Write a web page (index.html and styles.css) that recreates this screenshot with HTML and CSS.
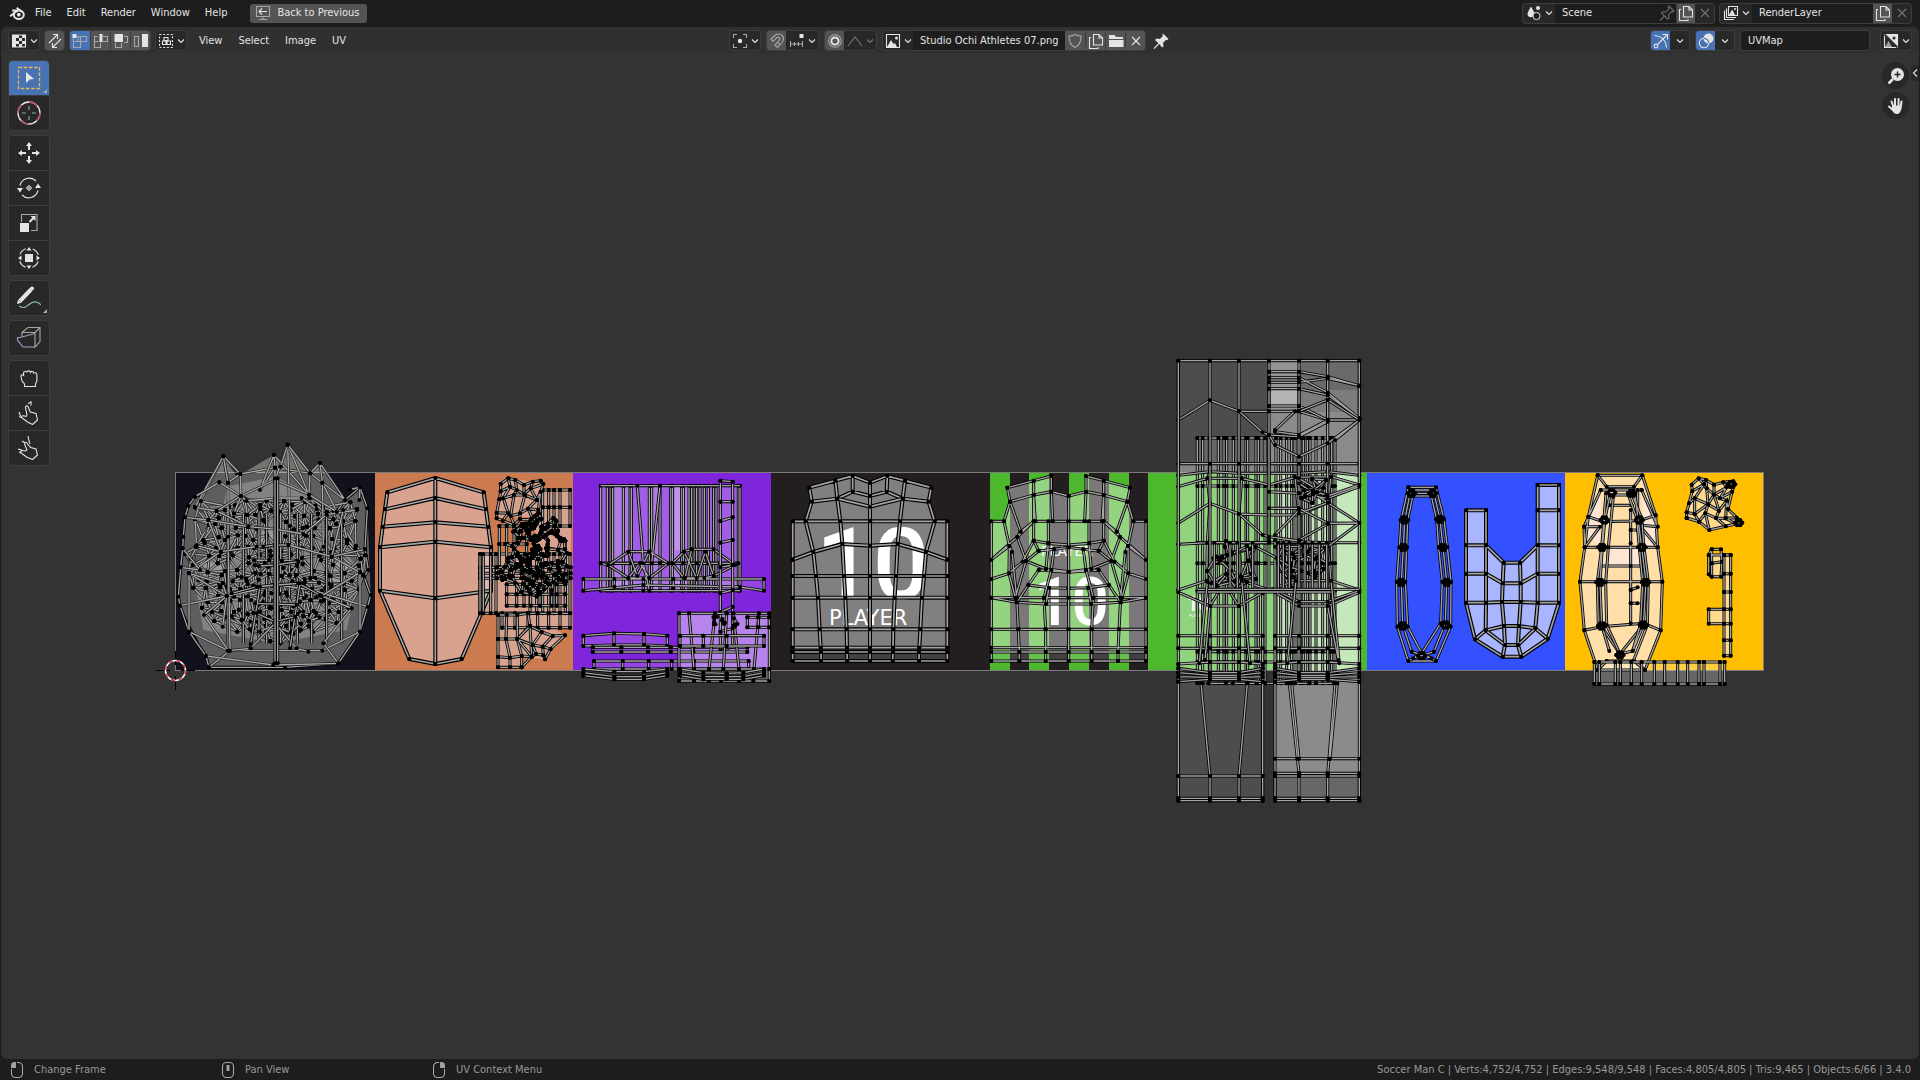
FILE: index.html
```html
<!DOCTYPE html>
<html lang="en">
<head>
<meta charset="utf-8">
<title>UV Editor</title>
<link rel="stylesheet" href="styles.css">
</head>
<body>
<svg class="sprite" aria-hidden="true">
  <symbol id="chev" viewBox="0 0 10 10"><path d="M2 3.500l3 3 3-3" class="ln"/></symbol>
  <symbol id="copy" viewBox="0 0 18 18"><path d="M6.500 2.500H12l3.500 3.500v7h-9zM12 2.500V6h3.500M4 5.500H2.500v11h8.500V15" class="ln"/></symbol>
  <symbol id="close" viewBox="0 0 18 18"><path d="M5 5l8 8M13 5l-8 8" class="ln"/></symbol>
  <symbol id="pin" viewBox="0 0 18 18"><path d="M11 2l5 5-1.500 1-1-.5-3 3.500.5 3-1.500 1L3.500 9l1.500-1.200 3 .2L11 5l-.8-1.500zM6.500 12L2 16.500" class="ln"/></symbol>
  <symbol id="pinfull" viewBox="0 0 18 18"><path d="M11 1.500l5.500 5.500-1.500 1.200-1-.4-3 3.200.6 3.200-1.600 1.300L7.300 12 3 16.600l-1.400.4.500-1.400L6.500 11.200 3 8l1.500-1.400 3.300.4 3.200-3-.6-1z" class="fl"/></symbol>
  <symbol id="blender" viewBox="0 0 18 18"><path d="M2 12.200L9.500 6.500H4.200M8.700 3.800l6 4.500" class="lg"/><ellipse cx="10.800" cy="10.700" rx="5" ry="4.300" class="lg"/><circle cx="10.800" cy="10.700" r="1.900" class="fl"/></symbol>
  <symbol id="back" viewBox="0 0 18 18"><path d="M2.500 2.500h13v10h-13zM9 13v2.500M5 15.500h8" class="ln dim"/><path d="M13 7.500H5M8 4.500l-3 3 3 3" class="ln"/></symbol>
  <symbol id="scene" viewBox="0 0 18 18"><path d="M6 2.500c2 3.500 3.500 5.600 3.500 8a3.600 3.600 0 0 1-7 0c0-2.400 1.500-4.500 3.500-8z" class="fl"/><circle cx="13" cy="4" r="2" class="fl"/><circle cx="11.500" cy="12" r="3.600" fill="#1f1f1f" class="disc"/></symbol>
  <symbol id="layers" viewBox="0 0 18 18"><path d="M2.500 6.500v9H12M4.500 4.500v9H14M6.500 2.500h9v9h-9z" class="ln"/><path d="M7 11l3.200-5.500 2.800 5.500z" class="fl"/><circle cx="13" cy="5" r="1" class="fl"/></symbol>
  <symbol id="uved" viewBox="0 0 18 18"><path d="M2.500 3h13v12h-13z" class="ln"/><path d="M2 3h4v12H2zM6 3h3v3H6zM9 6h3v3H9zM12 3h3v3h-3zM6 9h3v3H6zM12 9h3v3h-3zM9 12h3v3H9z" class="fl"/></symbol>
  <symbol id="sync" viewBox="0 0 18 18"><path d="M3 11L11.500 2.500M7 2.500h4.500V7M15 7l-8.500 8.500M11 15.500H6.500V11" class="ln"/></symbol>
  <symbol id="vert" viewBox="0 0 18 18"><path d="M6.500 4.500h9v5h-13v6h7v-11M2.500 9.500v-3M7 10v-5" class="ln dim"/><path d="M1.500 2h4v4h-4z" class="fl"/></symbol>
  <symbol id="edge" viewBox="0 0 18 18"><path d="M5.500 4.500h-3v11h6v-5M2.500 9.500h4M11 4.500h4.500v5h-5" class="ln dim"/><path d="M7.500 2h3v8h-3z" class="fl"/></symbol>
  <symbol id="face" viewBox="0 0 18 18"><path d="M3.500 11v4.500h6V11M12 4.500h3.500v6H12" class="ln dim"/><path d="M2.500 2h8.500v8H2.500z" class="fl"/></symbol>
  <symbol id="island" viewBox="0 0 18 18"><path d="M2.500 4.500h4v10h-4z" class="ln dim"/><path d="M10 2h6v13h-6z" class="fl"/></symbol>
  <symbol id="sticky" viewBox="0 0 18 18"><path d="M2.500 2.500h13v13h-13z" class="ln" stroke-dasharray="2 1.700"/><path d="M7 5.500h4v3H7zM5.500 9h3.500v3.500H5.500zM10 9h3.500v3.500H10z" class="ln"/></symbol>
  <symbol id="pivot" viewBox="0 0 18 18"><path d="M2.500 6V2.500H6M12 2.500h3.500V6M15.500 12v3.500H12M6 15.500H2.500V12" class="ln dim"/><circle cx="9" cy="9" r="2.200" class="fl"/></symbol>
  <symbol id="magnet" viewBox="0 0 18 18"><path d="M3 7l4.500-4c5-3 10 2 7 7l-5 5.500-2.500-2.500L11.500 8c1-2-.5-3.500-2.500-2.500L5 9.500zM9.500 10.500l2.500 2.500" class="ln dim"/></symbol>
  <symbol id="incr" viewBox="0 0 18 18"><path d="M2.500 9v6M2.500 12h12M14.500 9v6M6.500 10v4M10.500 10v4" class="ln dim"/><path d="M11.500 2h4v4h-4z" class="fl"/></symbol>
  <symbol id="prop" viewBox="0 0 18 18"><circle cx="9" cy="9" r="6.300" class="ln dim"/><circle cx="9" cy="9" r="3.600" class="lg"/></symbol>
  <symbol id="falloff" viewBox="0 0 18 18"><path d="M2 14L9 5l7 9" class="ln"/></symbol>
  <symbol id="image" viewBox="0 0 18 18"><path d="M2.500 2.500h13v13h-13z" class="ln"/><path d="M3 15L7 8l2.500 4 1.500-1 2 4z" class="fl"/><circle cx="12.500" cy="6" r="1.500" class="fl"/></symbol>
  <symbol id="shield" viewBox="0 0 18 18"><path d="M9 2.500c2 1.300 4 1.700 6 1.500 0 6-1.500 9.500-6 11.500-4.500-2-6-5.500-6-11.500 2 .2 4-.2 6-1.500z" class="ln dim"/></symbol>
  <symbol id="folder" viewBox="0 0 18 18"><path d="M2 3h5.500l1.500 2h7v2H2zM2 8h14.500v7H2z" class="fl"/></symbol>
  <symbol id="gizmo" viewBox="0 0 18 18"><path d="M5 13L15 3M10.500 2.500H15.500V7.500M2.500 3.500c7 .5 11.500 5 12 12" class="ln"/><circle cx="4" cy="14" r="1.900" class="ln"/></symbol>
  <symbol id="overlay" viewBox="0 0 18 18"><circle cx="11.500" cy="6.500" r="5" class="fl"/><circle cx="7" cy="11" r="4.700" class="ln"/><path d="M7 6.300a4.700 4.700 0 0 1 4.700 4.700" fill="none" stroke="#4772b3" stroke-width="1.200"/></symbol>
  <symbol id="display" viewBox="0 0 18 18"><path d="M2.500 2.500h13v13h-13z" class="ln"/><path d="M2 2h13.500v13z" class="fl"/><path d="M3 15l3.500-6 3.500 6z" class="fl dimf"/><circle cx="12" cy="6" r="1.600" fill="#303030"/><path d="M2.500 2.500l13 13" stroke="#303030" stroke-width="2"/></symbol>
  <symbol id="t-select" viewBox="0 0 24 24"><path d="M1.500 1.500h21v21h-21z" fill="none" stroke="#f0b45a" stroke-width="1.300" stroke-dasharray="3.500 1.700"/><path d="M9 6l8 7-4.300.6L9 17z" class="fl"/></symbol>
  <symbol id="t-cursor" viewBox="0 0 24 24"><circle cx="12" cy="12" r="11" fill="none" stroke="#e8e8e8" stroke-width="1.300"/><circle cx="12" cy="12" r="11" fill="none" stroke="#b8445c" stroke-width="1.300" stroke-dasharray="8.640 8.640"/><path d="M12 5v4M12 15v4M5 12h4M15 12h4" fill="none" stroke="#7fae98" stroke-width="1.200"/></symbol>
  <symbol id="t-move" viewBox="0 0 24 24"><path d="M12 1l3 4H9zM12 23l3-4H9zM1 12l4-3v6zM23 12l-4-3v6z" class="fl"/><path d="M12 5v4M12 15v4M5 12h4M15 12h4" class="lg"/></symbol>
  <symbol id="t-rotate" viewBox="0 0 24 24"><path d="M3 9.500A9.500 9.500 0 0 1 19 5M21 14.500A9.500 9.500 0 0 1 5 19" class="ln"/><path d="M0 12h6l-3 4.500zM24 12h-6l3-4.500z" class="fl"/><path d="M12 9l3 3-3 3-3-3z" fill="#a0a0a0" stroke="#a0a0a0"/></symbol>
  <symbol id="t-scale" viewBox="0 0 24 24"><path d="M4.500 11V3.500h15.500v16H14" class="ln dim"/><path d="M3 12h9v9H3zM18.500 5v5l-5-5z" class="fl"/><path d="M12.500 11l4-4" class="lg"/></symbol>
  <symbol id="t-transform" viewBox="0 0 24 24"><circle cx="12" cy="12" r="9.800" class="ln" stroke-dasharray="8.400 7" stroke-dashoffset="-3.500"/><path d="M8 8h8v8H8zM12 1l2.500 3.500h-5zM12 23l2.500-3.500h-5zM1 12l3.500-2.500v5zM23 12l-3.500-2.500v5z" class="fl"/></symbol>
  <symbol id="t-annotate" viewBox="0 0 24 24"><path d="M3 15L14 3.500" stroke="#e4e4e4" stroke-width="4"/><path d="M0 18l1-4.500 3.500 3.300z" class="fl"/><circle cx="15" cy="2.600" r="2" class="fl"/><path d="M2 20c5 3 7 1 10-1.500S20 14 24 19" fill="none" stroke="#7dbd95" stroke-width="1.200"/></symbol>
  <symbol id="t-rip" viewBox="0 0 24 24"><path d="M5 6.500l6-5h12v14L18 21V6.500h-13v4M18 6.500l5-5" class="ln dim"/><path d="M-1 12.500L18 7.500M18 21H6L-1 12.500" fill="none" stroke="#a9a2c9" stroke-width="1.100"/><circle cx="-1" cy="12.500" r="1.900" fill="#b7b0dc"/></symbol>
  <symbol id="t-grab" viewBox="0 0 24 24"><path d="M7.500 20.500v-2.500L5 15l-1-4.500c0-1.800 1.500-2.200 2.600-1.200V6.700c.6-2 3-1.700 3.200-.4.5-2 3.400-1.900 3.700 0 .8-1.500 3.200-1 3.400.8 1.200-.8 3 0 3 1.700v6L18.500 18v2.500z" class="ln"/></symbol>
  <symbol id="t-relax" viewBox="0 0 24 24"><path d="M10 14L8.500 6.500c0-2 2.500-2.300 3 0l1.700 4.500 5.800 1.500 1.500 6.500-5 4.500-5-2.500-6-4.500c0-2 2-2.300 4.500-1zM2 11l1.500 4M11 2.500l3-1.500v3.500M2 15.500l2.500 1" class="ln"/></symbol>
  <symbol id="t-pinch" viewBox="0 0 24 24"><path d="M10 14L7.500 8c0-2 2-2.600 3 0l3.200 3.500 5.300 1.500 1.500 6-5 4.500-6-2.500-6-4.500c0-2 2-2.500 4.500-1.500zM1 13l4 1M5 5l3 2M11 0l1 5M2 16l3 1.500M13 8l-1-3" class="ln"/></symbol>
  <symbol id="g-zoom" viewBox="0 0 18 18"><circle cx="10.500" cy="7.500" r="6.500" class="fl"/><path d="M6 12l-4.500 4.500" stroke="#e4e4e4" stroke-width="2.500"/><path d="M10.500 4.500v6M7.500 7.500h6" stroke="#222" stroke-width="1.400"/></symbol>
  <symbol id="g-hand" viewBox="0 0 18 18"><path d="M4.500 4.500L6.500 10M8 2v8M11.500 2v8M14.500 4.500L13.500 11M2 9.500L6 13" stroke="#e4e4e4" stroke-width="2" stroke-linecap="round"/><path d="M5.500 8.500h9c0 4-1 8.500-4.500 8.500-3 0-4.500-2.500-5.500-5z" class="fl"/></symbol>
  <symbol id="m-l" viewBox="0 0 12 18"><path d="M6 1.500h1.500a4 4 0 0 1 4 4v7a4 4 0 0 1-4 4h-3a4 4 0 0 1-4-4V8" class="ln dim"/><path d="M0 7V4.500A3.500 3.500 0 0 1 3.500 1H5v6z" class="fl dimf"/></symbol>
  <symbol id="m-m" viewBox="0 0 12 18"><rect x=".5" y="1.500" width="11" height="15" rx="4" class="ln dim"/><path d="M4.500 4h3v6h-3z" class="fl dimf"/></symbol>
  <symbol id="m-r" viewBox="0 0 12 18"><path d="M6 1.500H4.500a4 4 0 0 0-4 4v7a4 4 0 0 0 4 4h3a4 4 0 0 0 4-4V8" class="ln dim"/><path d="M12 7V4.500A3.500 3.500 0 0 0 8.500 1H7v6z" class="fl dimf"/></symbol>
</svg>

<header class="topbar">
  <nav class="menus" aria-label="Application">
    <button class="logo" aria-label="Blender"><svg class="i"><use href="#blender"/></svg></button>
    <button>File</button><button>Edit</button><button>Render</button><button>Window</button><button>Help</button>
    <button class="back"><svg class="i"><use href="#back"/></svg>Back to Previous</button>
  </nav>
  <div class="side">
    <div class="grp">
      <button class="dd wide" aria-label="Browse scene"><svg class="i"><use href="#scene"/></svg><svg class="c"><use href="#chev"/></svg></button>
      <input class="f-top" aria-label="Scene name" value="Scene"><button class="sq deep faint" aria-label="Pin scene"><svg class="i"><use href="#pin"/></svg></button>
      <button class="sq lit" aria-label="New scene"><svg class="i"><use href="#copy"/></svg></button><button class="sq faint" aria-label="Delete scene"><svg class="i"><use href="#close"/></svg></button>
    </div>
    <div class="grp">
      <button class="dd wide" aria-label="Browse layer"><svg class="i"><use href="#layers"/></svg><svg class="c"><use href="#chev"/></svg></button>
      <input class="f-top wide" aria-label="Layer name" value="RenderLayer">
      <button class="sq lit" aria-label="New layer"><svg class="i"><use href="#copy"/></svg></button><button class="sq faint" aria-label="Delete layer"><svg class="i"><use href="#close"/></svg></button>
    </div>
  </div>
</header>

<main class="editor">
  <div class="head">
    <div class="part start">
      <div class="grp"><button class="dd" aria-label="Editor type"><svg class="i"><use href="#uved"/></svg><svg class="c"><use href="#chev"/></svg></button></div>
      <div class="grp"><button class="sq lit" aria-label="Sync selection"><svg class="i"><use href="#sync"/></svg></button></div>
      <div class="grp modes"><button class="sq on" aria-label="Vertex"><svg class="i"><use href="#vert"/></svg></button><button class="sq lit" aria-label="Edge"><svg class="i"><use href="#edge"/></svg></button><button class="sq lit" aria-label="Face"><svg class="i"><use href="#face"/></svg></button><button class="sq lit" aria-label="Island"><svg class="i"><use href="#island"/></svg></button></div>
      <div class="grp"><button class="dd" aria-label="Sticky selection"><svg class="i"><use href="#sticky"/></svg><svg class="c"><use href="#chev"/></svg></button></div>
      <nav class="menus sub" aria-label="Editor"><button>View</button><button>Select</button><button>Image</button><button>UV</button></nav>
    </div>
    <div class="part mid">
      <div class="grp"><button class="dd" aria-label="Pivot"><svg class="i"><use href="#pivot"/></svg><svg class="c"><use href="#chev"/></svg></button></div>
      <div class="grp"><button class="sq lit" aria-label="Snap"><svg class="i"><use href="#magnet"/></svg></button><button class="dd wide" aria-label="Snap target"><svg class="i"><use href="#incr"/></svg><svg class="c"><use href="#chev"/></svg></button></div>
      <div class="grp"><button class="sq lit" aria-label="Proportional editing"><svg class="i"><use href="#prop"/></svg></button><button class="dd wide off" aria-label="Falloff"><svg class="i"><use href="#falloff"/></svg><svg class="c"><use href="#chev"/></svg></button></div>
      <div class="grp file"><button class="dd" aria-label="Browse image"><svg class="i"><use href="#image"/></svg><svg class="c"><use href="#chev"/></svg></button><input class="f-img" aria-label="Image name" value="Studio Ochi Athletes 07.png"><button class="sq lit" aria-label="Fake user"><svg class="i"><use href="#shield"/></svg></button><button class="sq lit" aria-label="New image"><svg class="i"><use href="#copy"/></svg></button><button class="sq lit" aria-label="Open image"><svg class="i"><use href="#folder"/></svg></button><button class="sq lit" aria-label="Unlink"><svg class="i"><use href="#close"/></svg></button></div>
      <button class="bare" aria-label="Pin image"><svg class="i"><use href="#pinfull"/></svg></button>
    </div>
    <div class="part end">
      <div class="grp"><button class="sq on" aria-label="Gizmos"><svg class="i"><use href="#gizmo"/></svg></button><button class="sq" aria-label="Gizmo options"><svg class="c"><use href="#chev"/></svg></button></div>
      <div class="grp"><button class="sq on" aria-label="Overlays"><svg class="i"><use href="#overlay"/></svg></button><button class="sq" aria-label="Overlay options"><svg class="c"><use href="#chev"/></svg></button></div>
      <div class="grp"><input class="f-uv" aria-label="Active UV map" value="UVMap"></div>
      <div class="grp last"><button class="dd" aria-label="Display channels"><svg class="i"><use href="#display"/></svg><svg class="c"><use href="#chev"/></svg></button></div>
    </div>
  </div>
  <div class="stage">
    <svg class="uv" viewBox="1 53 1918 1006" role="img" aria-label="UV layout">
      <defs><marker id="v" markerUnits="userSpaceOnUse" markerWidth="14" markerHeight="14" viewBox="-7 -7 14 14" overflow="visible"><circle r="6"/></marker></defs>
      <g id="tiles">
        <path fill="#11121b" d="M175 473h200v197H175z"/><path fill="#cc7a50" d="M375 473h198v197H375z"/>
        <path fill="#7f25dc" d="M573 473h198v197H573z"/><path fill="#231f20" d="M771 473h377v197H771z"/>
        <path fill="#4db82e" d="M990 473h20v197h-20zM1029 473h20v197h-20zM1069 473h20v197h-20zM1109 473h20v197h-20zM1148 473h219v197h-219z"/>
        <path fill="#3351ff" d="M1367 473h198v197h-198z"/><path fill="#ffbe00" d="M1565 473h199v197h-199z"/>
        <rect x="175.500" y="472.500" width="1588" height="198" fill="none" stroke="#7a7a7a"/>
      </g>
      <g id="fills"></g>
      <g class="print">
        <text x="816" y="599" class="num-l">10</text><text x="829" y="625" class="name-l">PLAYER</text>
        <text x="1034" y="625" class="num-m">10</text><text x="1041" y="556" class="name-m">PLAYER</text>
        <text x="1187" y="611" class="num-s">10</text><text x="1189" y="617" class="name-s">PLAYER</text>
      </g>
      <g id="wires"></g>
      <g class="cur"><path d="M156 670.500h14M181 670.500h14M175.500 651v14M175.500 676v14" stroke="#000"/><circle cx="175.500" cy="670.500" r="10"/><circle cx="175.500" cy="670.500" r="10" class="red"/></g>
    </svg>
    <div class="tools" role="toolbar" aria-label="Tools">
      <div class="tg"><button class="on more" aria-label="Select box"><svg><use href="#t-select"/></svg></button><button aria-label="Cursor"><svg><use href="#t-cursor"/></svg></button></div>
      <div class="tg"><button aria-label="Move"><svg><use href="#t-move"/></svg></button><button aria-label="Rotate"><svg><use href="#t-rotate"/></svg></button><button aria-label="Scale"><svg><use href="#t-scale"/></svg></button><button aria-label="Transform"><svg><use href="#t-transform"/></svg></button></div>
      <div class="tg"><button class="more" aria-label="Annotate"><svg><use href="#t-annotate"/></svg></button></div>
      <div class="tg"><button aria-label="Rip region"><svg><use href="#t-rip"/></svg></button></div>
      <div class="tg"><button aria-label="Grab"><svg><use href="#t-grab"/></svg></button><button aria-label="Relax"><svg><use href="#t-relax"/></svg></button><button aria-label="Pinch"><svg><use href="#t-pinch"/></svg></button></div>
    </div>
    <div class="nav"><div class="rounds"><button aria-label="Zoom"><svg><use href="#g-zoom"/></svg></button><button aria-label="Pan"><svg><use href="#g-hand"/></svg></button></div><button class="tab" aria-label="Show sidebar"><svg viewBox="0 0 8 16"><path d="M6 4.500L2.500 8 6 11.500" class="ln"/></svg></button></div>
  </div>
</main>

<footer class="status">
  <span class="hint"><svg><use href="#m-l"/></svg>Change Frame</span>
  <span class="hint"><svg><use href="#m-m"/></svg>Pan View</span>
  <span class="hint"><svg><use href="#m-r"/></svg>UV Context Menu</span>
  <span class="stats">Soccer Man C | Verts:4,752/4,752 | Edges:9,548/9,548 | Faces:4,805/4,805 | Tris:9,465 | Objects:6/66 | 3.4.0</span>
</footer>
<script src="mesh.js"></script>
</body>
</html>
```

FILE: mesh.js
```js
// Island coordinates are stored at three units per canvas pixel, relative to an origin.
const NS = 'http://www.w3.org/2000/svg';
const layer = (id, x, y) => {
  const g = document.createElementNS(NS, 'g');
  g.setAttribute('transform', `translate(${x} ${y}) scale(${1 / 3})`);
  document.getElementById(id).append(g);
  return g;
};
function island(x, y, tint = '') {
  const f = layer('fills', x, y), w = layer('wires', x, y);
  const add = (g, d, cls, a) => {
    const p = document.createElementNS(NS, 'path');
    p.setAttribute('d', d);
    p.setAttribute('class', cls);
    if (a !== undefined) p.setAttribute('fill-opacity', a);
    g.append(p);
  };
  const api = {
    fill: (d, a, t = tint) => add(f, d, 'skin ' + t, a),
    lines(d, thin) {
      const k = thin ? ' thin' : '';
      add(w, d, 'dark' + k);
      add(w, d, 'light' + k);
    },
    wire(d, thin) { api.lines(d, thin); add(w, d, 'dots'); },
    // every edge keeps its own outline, so crossing edges stay apart
    weave(d, k = 'thin') {
      d.split('M').slice(1).forEach(s => { add(w, 'M' + s, 'dark ' + k); add(w, 'M' + s, 'light ' + k); });
      add(w, d, 'dots');
    }
  };
  return api;
}
// "x,y x,y | x,y x,y" -> path data; mirror reflects about an x axis
const poly = s => s.split('|').map(r => 'M' + r.trim().split(/\s+/).join('L')).join('');
const mirror = (s, c) => s.replace(/(\d+),(\d+)/g, (_, a, b) => `${2 * c - a},${b}`);
const grid = rows => {
  const p = rows.map(r => r.trim().split(/\s+/));
  let d = p.map(r => 'M' + r.join('L')).join('');
  p[0].forEach((_, i) => { d += 'M' + p.map(r => r[i]).join('L'); });
  return d;
};
const box = (xs, ys) => grid(ys.map(y => xs.map(x => x + ',' + y).join(' ')));
const bars = (xs, a, b) => xs.map(x => `M${x},${a}L${x},${b}`).join('');
let seed = 11;
const rnd = () => {
  seed = (seed + 0x6D2B79F5) | 0;
  let t = Math.imul(seed ^ (seed >>> 15), 1 | seed);
  t = (t + Math.imul(t ^ (t >>> 7), 61 | t)) ^ t;
  return ((t ^ (t >>> 14)) >>> 0) / 4294967296;
};
function web(pts, n, skip = 0) {
  let d = '';
  pts.forEach((p, i) => {
    pts.map((q, j) => [Math.hypot(p[0] - q[0], p[1] - q[1]), j]).sort((a, b) => a[0] - b[0]).slice(1 + skip, n + 1 + skip)
      .forEach(([, j]) => { if (j > i || rnd() > .6) d += `M${p}L${pts[j]}`; });
  });
  return d;
}
const cloud = (n, cx, cy, rx, ry, k = .5) => Array.from({ length: n }, () => {
  const a = rnd() * 6.283, r = Math.pow(rnd(), k);
  return [Math.round(cx + rx * r * Math.cos(a)), Math.round(cy + ry * r * Math.sin(a))];
});
const twins = (pts, c) => pts.flatMap(([x, y]) => [[x, y], [2 * c - x + Math.round(rnd() * 8), y + Math.round(rnd() * 6)]]);
// points on a loose lattice, kept when they fall inside the ellipse
const scatter = (step, cx, cy, rx, ry) => {
  const out = [];
  for (let y = cy - ry; y <= cy + ry; y += step)
    for (let x = cx - rx; x <= cx; x += step) {
      const p = [Math.round(x + (rnd() - .5) * step * .9), Math.round(y + (rnd() - .5) * step * .9)];
      if (((p[0] - cx) / rx) ** 2 + ((p[1] - cy) / ry) ** 2 < 1) out.push(p);
    }
  return out;
};

// Head
const A = island(160, 430);
A.fill('M105,200L130,205L190,79L230,140L342,75L362,100L383,44L450,130L480,99L550,210L600,172L622,235L632,495L600,605L535,700L375,712L147,712L138,678L60,527L62,415L72,262Z', .32, 'warm');
A.fill('M200,170L345,140L450,190L500,300L600,420L560,600L345,640L130,600L100,430L180,300Z', .24, 'warm');
A.fill('M120,400L215,400L200,480L120,440ZM520,380L600,420L560,480L500,440ZM310,300L400,300L430,350L290,350Z', .2, 'warm');
const rim = '105,200 85,228 75,262 70,320 68,355 62,412 55,500 60,527 87,605 138,678 147,712 375,712 535,700 600,605 623,530 632,495 612,440 625,420 615,358 622,235 600,172 555,210 530,245';
const hair = '122,213 190,79 204,158 241,132 345,113 450,130 487,158 530,245|241,132 190,79 105,232|204,158 190,79|342,75 300,180 345,113 342,75 447,194 383,44 345,150|383,44 390,288|383,44 362,110|383,44 450,130 447,194|480,99 450,130|480,99 555,210 487,158 480,99|487,158 490,350|204,158 204,320 210,662 147,712|241,132 243,198 345,150 447,194 530,245|170,243 243,198 260,213 345,204 425,204 470,237|105,232 170,243 265,290 350,298 430,312 500,254 590,240|178,157 105,200|178,157 243,198 222,250|570,178 600,172 598,210|345,113 347,690 340,705|87,605 205,662 487,662 600,605|138,678 340,705 535,700|205,662 272,655 345,580 410,655 445,665|60,527 200,498 355,465 455,480 623,530|87,430 182,365 290,350 385,345 515,380 600,427|87,430 200,498 132,555 205,662|600,427 485,498 575,535 490,640 535,700|110,347 182,365 145,270 265,290|75,262 145,270|615,358 515,380 550,240|68,355 120,420 62,412|188,460 87,430|188,460 200,498 188,590|87,430 87,605|600,427 600,605';
A.wire(poly(rim), 1);
const known = '105,232 122,213 170,243 145,270 105,267 110,347 182,365 200,498 87,430 188,460 265,290 300,225 222,250 310,270 243,198'.split(' ').map(s => s.split(',').map(Number));
const head = twins([...known, ...scatter(32, 345, 415, 275, 225)], 345);
const features = twins(scatter(27, 345, 500, 150, 120), 345);
A.weave(web(head, 3, 7), 'soft');
A.weave(web(head, 3, 2), 'soft');
A.lines(bars([204, 250, 297, 320, 362, 388, 412, 455, 500, 545], 250, 640), 1);
A.weave(web(features, 2, 2), 'soft');
A.weave(poly(hair), 'soft');
A.wire(poly('272,655 272,642 300,470 420,460 390,655|285,520 410,525 430,545|310,350 345,345 385,345|297,408 345,405 415,395|290,550 345,575 405,560|215,490 290,470 345,465 415,460 480,495'), 1);
A.wire(bars([345, 353], 145, 700), 1);

// Face and torso skin
A.fill('M826,144L971,187L993,352L990,482L905,687L826,702L748,687L660,482L660,352L682,187Z', .5, 'rose');
A.wire(grid(['682,187 826,144 971,187', '675,238 826,204 978,238', '668,290 826,277 985,290', '660,352 826,335 993,352', '660,482 826,505 993,482', '748,687 826,702 905,687']));

// Hands
A.fill('M960,372H1235V595H1010V550H960ZM1125,180H1232V372H1125ZM1010,550H1110L1215,616L1155,688L1085,680V712H1014ZM1020,160L1045,145L1150,160L1125,260L1010,265Z', .5, 'rose');
A.wire(box([960, 1008, 1110, 1130, 1148, 1166, 1182, 1200, 1216, 1230], [372, 550]), 1);
A.wire(box([1148, 1166, 1182, 1200, 1230], [180, 232, 288]), 1);
A.wire(box([1018, 1040, 1062, 1100], [288, 342, 412]), 1);
A.wire(box([960, 1010, 1050, 1085, 1130, 1232], [412, 430, 445]), 1);
A.wire(box([1040, 1070, 1092, 1112, 1140, 1175, 1190, 1216], [463, 493, 527]), 1);
A.wire(box([1026, 1065, 1104, 1133, 1166, 1200, 1230], [550, 593]), 1);
A.wire(bars([960, 970, 992], 372, 550), 1);
A.wire(grid(['1014,555 1040,555 1072,555 1104,550', '1014,627 1038,627 1072,627 1110,588', '1014,680 1050,683 1085,678 1115,680', '1014,712 1050,712 1085,712 1085,712']), 1);
A.wire(grid(['1110,588 1145,606 1178,618 1215,616', '1072,627 1118,645 1148,650 1172,657', '1115,680 1128,672 1150,676 1155,688']), 1);
A.wire(grid(['1022,162 1045,145 1066,150 1092,165 1118,155 1142,152', '1022,184 1050,170 1070,180 1092,192 1112,175 1150,162', '1018,208 1030,205 1062,195 1095,195 1130,210 1142,185', '1010,248 1045,250 1052,258 1080,250 1104,236 1135,240', '1010,265 1028,272 1062,285 1080,268 1120,270 1140,255']), 1);
A.weave(web([...cloud(100, 1128, 380, 98, 120, .6), ...cloud(40, 1135, 300, 60, 60), ...cloud(50, 1125, 430, 105, 60)], 4, 1));

// Kit
const B = island(560, 450);
B.fill('M122,107H542V422H122Z', .26);
B.fill('M158,107H210V422H158ZM275,107H300V422H275ZM340,107H405V422H340Z', .18);
B.fill('M345,107H365V300H345Z', .2);
B.fill('M70,387H612V422H70Z', .15);
B.fill('M357,490H630V660H357Z', .44);
B.fill('M357,660H630V693H357Z', .25);
B.fill('M70,555L162,550L322,557V588H70ZM100,592H350V606H100ZM102,633H350V657H102Z', .15);
B.weave(bars([122, 142, 153, 158, 190, 210, 214, 268, 275, 300, 332, 337, 365, 370, 387, 395, 405, 410, 420, 433, 445, 461, 468, 535, 540], 107, 422));
B.lines('M122,107H540M122,340H540M122,422H540', 1);
B.wire(poly([122, 158, 214, 250, 300, 340, 370, 410, 445, 480, 518, 535].map(x => x + ',340').join(' ')), 1);
B.wire(poly('232,107 250,340 268,422|300,107 275,340|122,340 145,345 205,305 268,305 325,340 268,384 205,384 145,345|337,340 372,305 395,298 461,298 525,345 461,378 433,384 372,384 337,340|205,305 232,378 268,305|205,384 240,340 268,384|372,305 410,384 436,305|395,298 375,384|436,305 461,378|70,422 70,387 340,387 612,387 612,422 540,411 250,405 70,422|163,387 163,410|250,387 250,422|340,387 340,415'), 1);
B.wire(grid(['481,92 518,95', '481,155 518,155', '481,213 518,202', '481,278 518,270', '481,352 518,345', '481,430 518,420', '481,487 518,470', '481,545 518,535', '481,604 518,590']), 1);
B.wire(grid(['70,557 162,550 252,552 322,557', '70,588 162,585 252,585 322,588']), 1);
B.wire(grid(['98,592 184,592 264,592 332,592 400,592 562,592', '98,606 184,606 264,606 332,606 400,606 562,606']), 1);
B.wire(grid(['102,633 188,633 266,633 335,633 402,633 566,633', '102,657 188,657 266,657 335,657 402,657 566,657']), 1);
B.wire(grid(['70,657 163,665 252,665 322,657', '70,668 163,680 252,680 322,668', '70,677 163,688 252,688 322,677']), 1);
B.wire(grid(['357,490 387,490 465,490 500,490 520,490 597,490 628,490', '357,657 402,657 447,657 490,657 537,657 582,657 628,657', '357,693 402,693 447,693 483,693 537,693 580,693 628,693']), 1);
B.wire(box([360, 430, 500, 612], [557, 588]), 1);
B.wire(box([562, 595, 628], [502, 532]), 1);
B.wire(grid(['360,657 430,668 500,670 550,668 612,657', '360,668 430,680 500,680 550,680 612,668', '360,677 430,688 500,688 550,688 612,677']), 1);
B.wire(web([...cloud(7, 465, 512, 12, 22), ...cloud(7, 498, 508, 12, 24), ...cloud(7, 527, 515, 9, 22)], 1), 1);

// Shirt front
B.fill('M748,113L826,92L878,78L930,98L982,78L1035,92L1114,113L1106,155L1124,214H1162V606H698V214H737L755,155Z', .43);
B.fill('M698,606H1162V633H698Z', .15);
B.wire(grid(['748,113 826,92 878,78 930,98 982,78 1035,92 1114,113', '755,155 832,146 878,125 930,138 980,125 1028,146 1106,155']));
B.wire(poly('832,146 930,170 1028,146|930,138 930,214|698,214 737,214 841,214 930,214 1020,214 1124,214 1162,214|755,155 737,214 760,306|1106,155 1124,214 1098,306|832,146 841,214 847,282|1028,146 1020,214 1013,282|698,214 698,329|930,214 930,287|1162,214 1162,329'));
B.wire(grid(['698,329 760,306 847,282 930,287 1013,282 1098,306 1162,329', ...[[378, 768, 852], [443, 774, 856], [538, 779, 860], [593, 782, 861], [606, 783, 861], [633, 783, 862]].map(([y, a, b]) => `698,${y} ${a},${y} ${b},${y} 930,${y} ${1860 - b},${y} ${1860 - a},${y} 1162,${y}`)]));

// Shirt back
const C = island(960, 450);
C.fill('M94,214H132L150,155L142,113L221,92L274,78V125L326,138L378,125V78L430,92L508,113L502,155L520,214H557V606H94Z', .4);
C.fill('M94,606H557V633H94Z', .15);
const half = '142,113 221,92 274,78 274,125 326,138|142,113 150,155 221,135 274,125 278,214|221,92 221,135 226,214|150,155 132,214 94,214 94,633|132,214 148,288 156,306 170,443|150,155 182,245 172,261|221,214 182,245|221,135 221,214 278,214 326,214|94,329 148,288|94,329 172,261 221,214|265,214 265,280 326,285|221,214 221,272 265,280|221,272 188,335 147,370 94,387|172,261 198,333|148,288 147,370 166,443|236,303 282,298 326,292|236,303 198,333 258,357 326,365|265,280 258,357|282,298 274,360|221,272 236,303|236,360 205,405 267,413 326,415|236,360 326,367|198,333 166,443|205,405 170,457|274,360 252,443|267,413 258,462|94,443 170,443 252,443 326,443|94,443 170,457 258,462 326,462|170,443 175,538 178,606 178,633|252,443 257,538 257,606 257,633|94,538 175,538 257,538 326,538|94,593 326,593|94,606 178,606 257,606 326,606|94,633 178,633 257,633 326,633';
C.wire(poly(half), 1);
C.wire(poly(mirror(half, 326)), 1);
C.wire('M326,138L326,214L326,292L326,365L326,443L326,538L326,606L326,633', 1);

// Legs and sleeves
const D = island(1150, 340);
D.fill('M85,62H357V294H85ZM85,1000H338V1382H85Z', .13);
D.fill('M85,294H142V371H85Z', .13);
D.fill('M142,294H357V371H142Z', .25);
D.fill('M357,62H447V215H357Z', .48);
D.fill('M447,62H628V150H447Z', .27);
D.fill('M447,150H628V215H447Z', .36);
D.fill('M357,150H447V192H357Z', .3);
D.fill('M357,215H628V398H357Z', .43);
D.fill('M85,371H357V398H85Z', .4);
D.fill('M85,398H375V990H85Z', .38);
D.fill('M375,398H628V990H375Z', .68);
D.fill('M375,990H628V1300H375Z', .43);
D.fill('M375,1300H628V1382H375Z', .26);
const strands = [142, 158, 178, 205, 222, 230, 250, 268, 288, 293, 318, 325, 345, 378, 392, 410, 425, 435, 452, 460, 472, 480, 498, 518, 537, 545, 555];
D.weave(bars(strands, 294, 1030));
[294, 438, 608, 670, 752, 935, 966].forEach(y => D.wire('M' + strands.map(x => `${x},${y}`).join('L'), 1));
D.wire(poly('175,1030 228,1030 248,1030 292,1030 320,1030 345,1030 375,1030 410,1030 435,1030 478,1030 498,1030 552,1030'), 1);
D.wire(grid(['85,62 180,62 267,62 357,62 447,62 533,62 628,62', '85,240 180,181 267,214 357,214 447,214 533,240 628,240', '85,371 180,371 267,371 357,371 447,371 533,371 628,371', '85,406 180,395 267,400 357,400 447,400 533,395 628,406', '85,440 172,415 275,415 357,435 435,412 543,410 628,435', '85,549 180,490 267,522 357,525 447,525 533,488 628,549', '85,613 172,608 267,608 357,608 447,605 533,608 628,608', '85,750 170,722 275,722 357,750 438,722 543,722 628,750']), 1);
D.wire(poly('267,214 338,277 357,285 447,290|267,522 338,585 357,590 447,603|85,757 180,798 267,798 338,757|180,798 205,757|267,798 240,757|375,757 447,798 533,798 628,757|375,750 447,785 533,785 628,752|85,62 85,1382|180,371 180,1000|267,371 267,1000|628,62 628,1382|447,371 447,1020|533,371 533,1020|375,600 375,1382|338,760 338,1382|357,285 357,600'), 1);
D.wire(grid(['357,95 447,95 533,110 628,137', '357,113 447,113 533,158 628,235', '357,127 447,127 533,115 628,137', '357,146 447,146 533,165 628,235', '357,198 447,198 533,240 628,240']), 1);
D.wire(poly('447,214 533,180 628,240 533,310 447,350 375,315 357,285|375,270 435,214|375,275 447,285 533,240|447,290 533,245|628,240 555,300|447,415 533,468 628,435|357,455 447,460 533,475 628,440|357,505 447,505 533,550 628,549|447,520 533,488 447,430|628,549 533,620 447,662 375,620|375,585 447,510|447,600 533,552'), 1);
D.weave(web([...cloud(26, 245, 670, 95, 80), ...cloud(30, 460, 670, 85, 80), ...cloud(12, 490, 450, 60, 40)], 3, 2));
D.weave(bars([193, 240, 262, 308, 385, 400, 418, 447, 465, 487, 508, 530], 608, 752));
D.lines('M142,748H628M142,756H555', 1);
[[85, 180, 267, 338], [375, 447, 533, 628]].forEach(x => {
  D.wire(box(x, [887, 925]), 1);
  D.wire(grid([[972, 966, 966, 972], [985, 998, 998, 985], [998, 1006, 1006, 998], [1010, 1012, 1012, 1010], [1025, 1018, 1018, 1025]].map(r => r.map((y, i) => x[i] + ',' + y).join(' '))), 1);
  D.wire(box(x, [1308, 1375, 1382]), 1);
});
D.wire(poly('153,1030 180,1308|292,1030 267,1308|418,1030 442,1256 447,1300|425,1030 447,1256|555,1030 537,1256 533,1300|562,1030 540,1256|375,1256 442,1256 537,1256 628,1256|375,1300 447,1300 533,1300 628,1300'), 1);
D.wire(poly('172,725 148,970|275,722 300,970|438,722 412,970|543,722 568,970|180,798 165,960|533,798 565,960'), 1);

// Shoe sole
const E = island(1360, 450, 'cream');
const outer = '145,112 123,212 118,292 110,395 112,530 145,633 228,633 272,530 273,395 262,292 252,208 228,112 145,112';
const inner = '160,130 143,212 140,292 136,395 143,530 185,610 242,520 247,395 236,292 230,208 212,130 160,130';
const ring = '152,120 134,212 130,292 124,397 128,525 155,605 185,620 222,605 256,520 260,395 249,292 240,208 220,120 152,120';
E.wire(poly(ring), 1);
E.wire(poly(outer), 1);
E.wire(poly(inner), 1);
E.wire('M150,138L222,138', 1);
E.wire(poly('145,633 185,610 228,633|155,605 215,625|222,605 160,625'), 1);
const knots = s => E.wire(s.split(' ').map(p => {
  const [x, y] = p.split(',').map(Number);
  return `M${x - 11},${y}L${x - 5},${y - 8}L${x + 5},${y - 8}L${x + 11},${y}L${x + 5},${y + 8}L${x - 5},${y + 8}Z`;
}).join(''), 1);
knots('155,130 218,130 133,210 240,208 130,292 249,292 124,397 260,397 128,528 256,525 185,617');

// Shoe upper
E.fill('M318,181H378V286L431,338H480L533,286V105H597V458L563,566L484,620H428L345,568L318,458Z', .58, 'white');
E.wire(poly('318,181 378,181 378,286 318,286 318,181|318,286 318,371 318,458 345,568 428,620 484,620 563,566 597,458 597,371 597,286 597,181 597,105 533,105 533,181 597,181|533,181 533,286 597,286|378,286 431,338 480,338 533,286|318,371 378,371 428,400 482,400 533,371 597,371|318,458 378,458 426,456 482,456 533,458 597,458|378,286 378,371 378,458 377,541 435,585 474,585 526,535 533,458 533,371 533,286|431,338 428,400 426,456 432,528 435,585 428,620|480,338 482,400 482,456 477,528 474,585 484,620|377,541 432,528 477,528 526,535 563,566|377,541 345,568'));

// Second shoe
E.fill('M713,76H847L890,195L908,395L902,541L855,660H713L673,541L660,395L672,230Z', .66);
E.fill('M722,120L690,200L680,250L720,292ZM845,120L886,200L892,292L850,290ZM750,292H835L848,348H725Z', .5);
E.fill('M703,636H1095V702H703Z', .25, 'white');
E.wire(poly('713,76 847,76 887,196 893,292 907,395 902,541 855,660 713,660 673,541 660,395 674,292 685,200 713,76|713,76 740,110 822,110 847,76|722,120 672,230 674,292|845,120 893,230|722,120 845,120|750,166 815,166|685,200 728,215 838,212 887,196|672,230 720,230 674,292|893,230 838,225 893,292|674,292 726,292 845,292 893,292|722,348 845,348|660,395 720,395 857,395 907,395|673,541 725,530 850,520 902,541|740,633 822,633 855,660|740,633 713,660|725,530 780,612 850,525|812,180 812,240 812,280 812,348 812,420 812,460 812,520|833,120 833,240|812,240 833,240|812,420 833,412|812,460 833,460'), 1);
E.wire(poly('750,135 735,205 727,292 720,397 725,525 748,603|738,130 725,292 712,397 715,530|760,140 745,292 737,397 740,525 780,612 818,603 842,520 848,397 838,292 830,205 805,135 750,135|815,130 845,205 852,292 865,397 862,525 820,633|825,135 858,395 850,525 818,603'), 1);
knots('755,128 815,130 733,210 838,210 726,292 846,292 720,397 857,397 725,528 850,525 780,615');
E.fill('M995,104L1016,85L1062,104L1120,100L1100,152L1104,177L1145,220L1048,240L980,204Z', .55);
E.wire(grid(['995,104 1016,85 1038,90 1062,104 1090,97 1120,94', '997,123 1032,103 1040,115 1062,134 1100,112 1123,104', '987,160 1004,145 1044,163 1062,134 1080,145 1116,125', '980,187 1004,192 1044,163 1077,182 1100,152 1104,177', '980,204 1017,215 1036,190 1068,204 1097,205 1130,203', '980,204 1017,215 1048,240 1097,229 1128,222 1145,218']), 1);
knots('1115,103 1136,218');
E.fill('M1047,315H1086V380H1047ZM1092,315H1114V618H1092ZM1046,478H1092V521H1046Z', .55);
E.wire(poly('1055,298 1083,298 1086,335 1083,380 1055,380 1046,373 1046,315 1055,298 1055,340 1086,335|1055,340 1055,380|1046,315 1092,315 1112,315|1092,478 1046,478 1046,521 1092,521'), 1);
E.wire(box([1092, 1112], [315, 371, 426, 478, 521, 571, 617]), 1);
E.wire(box([703, 718, 766, 781, 814, 845, 883, 914, 953, 983, 1017, 1032, 1080, 1094], [636, 702]), 1);
```

FILE: styles.css
```css
* { box-sizing: border-box; }
html, body { height: 100%; }
body { margin: 0; display: flex; flex-direction: column; background: #1d1d1d; color: #e4e4e4; font: 11px/18px "DejaVu Sans Condensed", "DejaVu Sans", sans-serif; font-stretch: condensed; overflow: hidden; }
button, input { font: inherit; color: inherit; border: 0; margin: 0; padding: 0; background: none; min-width: 0; }
button { display: flex; align-items: center; justify-content: center; cursor: default; white-space: nowrap; }
.sprite { position: absolute; width: 0; height: 0; }
.ln { fill: none; stroke: #e4e4e4; stroke-width: 1.1; }
.lg { fill: none; stroke: #e4e4e4; stroke-width: 2; }
.fl { fill: #e4e4e4; }
.disc { stroke: #e4e4e4; }
.dim { stroke: #a8a8a8; }
.dimf { fill: #a0a0a0; }
.i { width: 18px; height: 18px; flex: none; }
.c { width: 10px; height: 10px; flex: none; }

.topbar { display: flex; justify-content: space-between; align-items: center; height: 26px; padding: 0 9px 0 8px; flex: none; }
.menus { display: flex; align-items: center; gap: 15px; }
.menus .logo { margin-right: -6px; }
.menus .back { height: 19px; margin-left: 8px; padding: 0 8px 0 4px; gap: 5px; border-radius: 3px; background: #545454; }
.side { display: flex; gap: 6px; }

.grp { display: flex; height: 19px; background: #282828; border-radius: 3px; box-shadow: 0 0 0 1px #3d3d3d; overflow: hidden; }
.dd { width: 30px; gap: 1px; }
.dd.wide { width: 32px; }
.sq { width: 19px; }
.file .sq, .modes .sq { width: 20px; }
.sq + .sq.lit { border-left: 1px solid #3d3d3d; }
.lit { background: #545454; }
.on { background: #4772b3; }
.faint svg { opacity: .4; }
.off svg { opacity: .4; }
.deep { background: #1d1d1d; }
input { background: #1d1d1d; padding: 0 7px; }
.f-top { width: 102px; }
.f-top.wide { width: 121px; }
.f-img { width: 152px; }
.f-uv { width: 128px; }

.editor { flex: 1; min-height: 0; margin: 1px 1px 0; display: flex; flex-direction: column; background: #333; border-radius: 6px; overflow: hidden; }
.head { display: grid; grid-template-columns: 1fr auto 1fr; align-items: center; height: 26px; flex: none; padding: 1px 8px 0; background: #303030; }
.part { display: flex; align-items: center; gap: 7px; }
.start { gap: 6px; }
.mid { padding-right: 20px; }
.end { justify-content: flex-end; }
.last { margin-left: 5px; }
.menus.sub { gap: 16px; margin-left: 7px; }

.stage { position: relative; flex: 1; min-height: 0; display: flex; justify-content: space-between; align-items: flex-start; }
.uv { position: absolute; inset: 0; width: 100%; height: 100%; }
.tools { position: relative; display: flex; flex-direction: column; gap: 6px; padding: 8px; }
.tg { display: flex; flex-direction: column; gap: 1px; background: #3d3d3d; border-radius: 4px; box-shadow: 0 0 0 1px #3d3d3d; overflow: hidden; }
.tg button { width: 40px; height: 34px; background: #282828; position: relative; }
.tg button.on { background: #4772b3; }
.tg svg { width: 24px; height: 24px; overflow: visible; }
.more::after { content: ""; position: absolute; right: 2px; bottom: 2px; border: 2px solid transparent; border-right-color: #aaa; border-bottom-color: #aaa; }
.nav { position: relative; display: flex; gap: 2px; padding-top: 9px; }
.rounds { display: flex; flex-direction: column; gap: 3px; }
.rounds button { width: 27px; height: 27px; border-radius: 50%; background: #282828; }
.rounds svg { width: 18px; height: 18px; }
.tab { width: 8px; height: 16px; margin-top: 3px; background: #282828; border-radius: 4px 0 0 4px; }
.tab svg { width: 8px; height: 16px; }

.skin { fill: #fff; }
.skin.rose { fill: #e6cacc; }
.skin.warm { fill: #fffff0; }
.skin.cream { fill: #ffeeff; }
.dark { fill: none; stroke: #000; stroke-width: 12; }
.light { fill: none; stroke: #a4a4a4; stroke-width: 5; }
.dark.thin { stroke-width: 9; }
.light.thin { stroke-width: 4; }
.dark.soft { stroke: #222; stroke-width: 8; }
.light.soft { stroke: #aaa; stroke-width: 4; }
.dots { fill: none; stroke: none; marker: url(#v); }
.cur circle { fill: none; stroke: #fff; stroke-width: 1.5; }
.cur .red { stroke: #e0324a; stroke-dasharray: 4 4; }
.print { fill: #fff; font-stretch: normal; }
.num-l, .num-m, .num-s { font-family: Roboto, sans-serif; font-weight: 500; }
.num-l { font-size: 100px; }
.num-m { font-size: 66px; }
.num-s { font-size: 20px; }
.name-l, .name-m, .name-s { font-family: "DejaVu Sans", sans-serif; }
.name-l { font-size: 21px; }
.name-m { font-size: 14px; }
.name-s { font-size: 4px; }

.status { display: flex; align-items: center; height: 21px; flex: none; padding: 0 9px; color: #989898; }
.hint { display: flex; align-items: center; gap: 11px; width: 211px; padding-left: 2px; }
.hint svg { width: 12px; height: 18px; }
.stats { margin-left: auto; white-space: nowrap; }
```
